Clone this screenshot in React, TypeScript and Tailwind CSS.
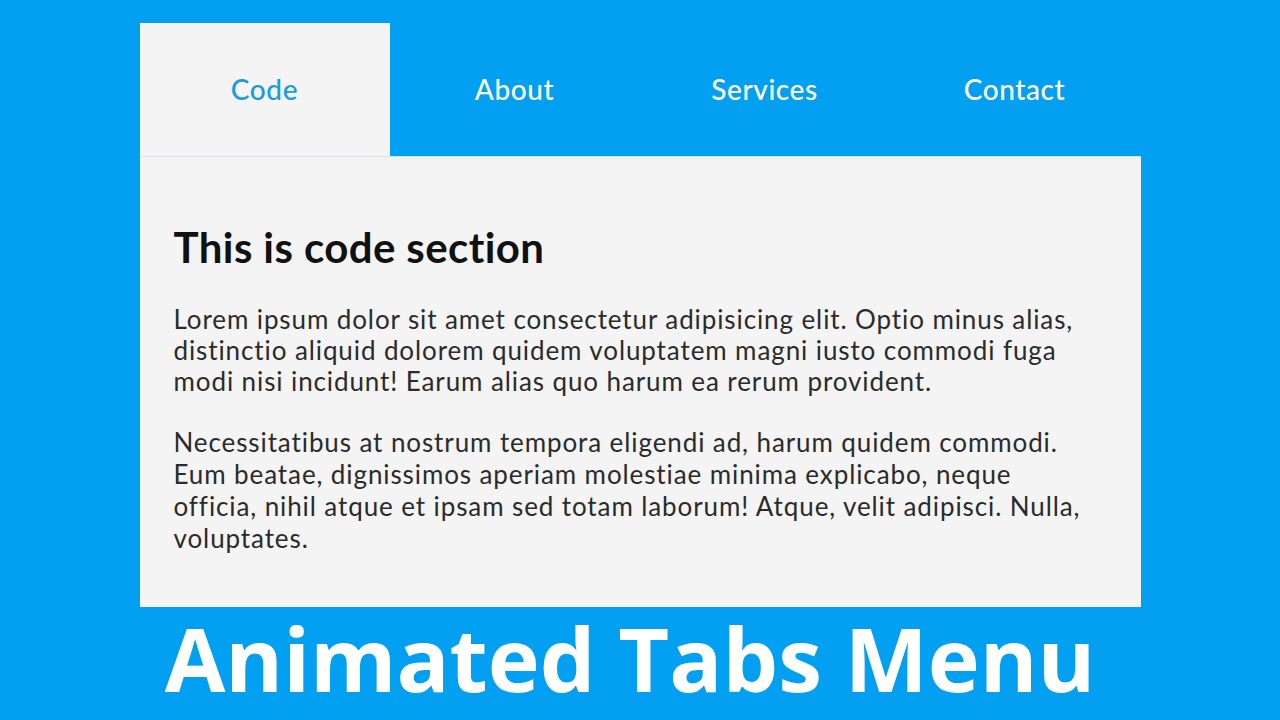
const tabs = ['Code', 'About', 'Services', 'Contact'];

export default function App() {
  const active = 0;

  return (
    <div className="flex h-[720px] w-[1280px] flex-col items-center overflow-hidden bg-[#03a0f2] pt-[23px] font-['Lato',sans-serif]">
      <div className="flex w-[1001px] flex-col">
        <div className="flex h-[133px]">
          {tabs.map((t, i) => (
            <button
              key={t}
              className={`flex w-[250px] items-center justify-center pb-[2px] text-[28px] font-medium tracking-[0.6px] ${
                i === active ? 'bg-[#f4f4f4] text-[#1b9ae2]' : 'text-white'
              }`}
            >
              {t}
            </button>
          ))}
        </div>

        <div className="h-[451px] border-t border-[#d5e6f3] bg-[#f4f4f4] pl-[34px] pr-[52px] pt-[65px] text-[#2b2b2b]">
          <h2 className="text-[42px] font-bold leading-[50px] tracking-[0.4px] text-[#111]">
            This is code section
          </h2>
          <p className="mt-[32px] text-[26px] leading-[31px] tracking-[0.9px]">
            Lorem ipsum dolor sit amet consectetur adipisicing elit. Optio
            minus alias, distinctio aliquid dolorem quidem voluptatem magni
            iusto commodi fuga modi nisi incidunt! Earum alias quo harum ea
            rerum provident.
          </p>
          <p className="mt-[29px] text-[26px] leading-[32px] tracking-[0.9px]">
            Necessitatibus at nostrum tempora eligendi ad, harum quidem
            commodi. Eum beatae, dignissimos aperiam molestiae minima
            explicabo, neque officia, nihil atque et ipsam sed totam laborum!
            Atque, velit adipisci. Nulla, voluptates.
          </p>
        </div>
      </div>

      <h1 className="mt-[7px] pr-[20px] font-['Open_Sans',sans-serif] text-[88px] font-bold leading-[88px] text-white">
        Animated Tabs Menu
      </h1>
    </div>
  );
}
